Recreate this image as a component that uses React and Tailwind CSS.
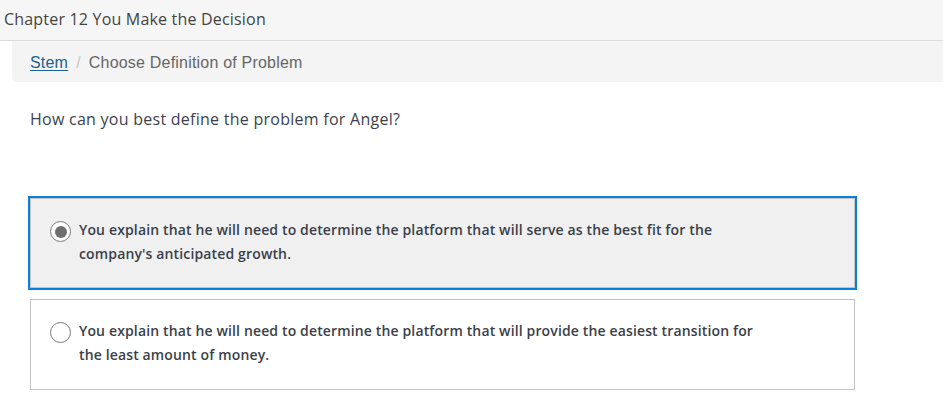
import React from "react";

function Radio({ checked }) {
  return (
    <span className="mt-[3px] flex h-[21px] w-[21px] shrink-0 items-center justify-center rounded-full border-[1.5px] border-[#7a7a7a] bg-white">
      {checked && <span className="h-[12px] w-[12px] rounded-full bg-[#6e6e6e]" />}
    </span>
  );
}

export default function App() {
  const open = { fontFamily: '"Open Sans", "Noto Sans", sans-serif' };
  const arial = { fontFamily: '"Liberation Sans", Arial, sans-serif' };
  return (
    <div className="h-[420px] w-[943px] overflow-hidden bg-white" style={open}>
      <div className="flex h-[41px] items-center border-b border-[#dcdcdc] bg-[#f6f6f6] pl-[4px] pb-[2px] text-[16px] tracking-[0.19px] text-[#444]">
        Chapter 12 You Make the Decision
      </div>
      <div className="ml-[12px] flex h-[41px] items-center rounded-bl-[5px] bg-[#f4f4f4] pl-[18px] pt-[2px] text-[16px] tracking-[0.2px]" style={arial}>
        <a href="#" className="text-[#1c5f91] underline underline-offset-2">Stem</a>
        <span className="px-[8px] text-[#c8c8c8]">/</span>
        <span className="text-[#666]">Choose Definition of Problem</span>
      </div>
      <div className="pl-[30px] pt-[25px] text-[16px] tracking-[0.26px] text-[#3c4250]">
        How can you best define the problem for Angel?
      </div>
      <div className="ml-[30px] mt-[67px] w-[825px]">
        <div className="flex h-[90px] items-start gap-[8px] border border-[#c4c4c4] bg-[#f0f0f0] pl-[19px] pt-[19px] outline-2 outline-[#0a7fdb] outline-solid">
          <Radio checked />
          <div className="text-[14px] font-semibold leading-[24px] tracking-[0.14px] text-[#3a3f4a]">
            You explain that he will need to determine the platform that will serve as the best fit for the<br />
            company's anticipated growth.
          </div>
        </div>
        <div className="mt-[11px] flex h-[91px] items-start gap-[8px] border border-[#c4c4c4] bg-white pl-[19px] pt-[19px]">
          <Radio />
          <div className="text-[14px] font-semibold leading-[24px] tracking-[0.14px] text-[#3a3f4a]">
            You explain that he will need to determine the platform that will provide the easiest transition for<br />
            the least amount of money.
          </div>
        </div>
      </div>
    </div>
  );
}
